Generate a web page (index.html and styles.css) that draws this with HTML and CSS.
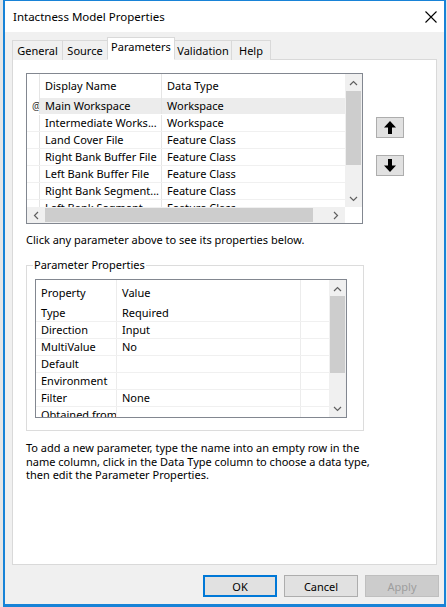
FILE: index.html
```html
<!DOCTYPE html>
<html>
<head>
<meta charset="utf-8">
<link rel="stylesheet" href="styles.css">
</head>
<body>
<div class="window">
  <div class="titlebar">
    <span class="title">Intactness Model Properties</span>
    <svg class="close" width="12" height="12" viewBox="0 0 12 12"><path d="M0.5 0.5 L11.5 11.5 M11.5 0.5 L0.5 11.5" stroke="#000" stroke-width="1.1" fill="none"/></svg>
  </div>
  <div class="client">
    <div class="tabs">
      <div class="tab t-general">General</div>
      <div class="tab t-source">Source</div>
      <div class="tab t-params active">Parameters</div>
      <div class="tab t-valid">Validation</div>
      <div class="tab t-help">Help</div>
    </div>
    <div class="panel">
      <div class="top-row">
        <div class="grid grid-top">
          <div class="content">
            <div class="row head">
              <div class="c ind"></div><div class="c name">Display Name</div><div class="c type">Data Type</div>
            </div>
            <div class="row sel">
              <div class="c ind"><span class="glyph">@</span></div><div class="c name">Main Workspace</div><div class="c type">Workspace</div>
            </div>
            <div class="row">
              <div class="c ind"></div><div class="c name">Intermediate Works...</div><div class="c type">Workspace</div>
            </div>
            <div class="row">
              <div class="c ind"></div><div class="c name">Land Cover File</div><div class="c type">Feature Class</div>
            </div>
            <div class="row">
              <div class="c ind"></div><div class="c name">Right Bank Buffer File</div><div class="c type">Feature Class</div>
            </div>
            <div class="row">
              <div class="c ind"></div><div class="c name">Left Bank Buffer File</div><div class="c type">Feature Class</div>
            </div>
            <div class="row">
              <div class="c ind"></div><div class="c name">Right Bank Segment...</div><div class="c type">Feature Class</div>
            </div>
            <div class="row">
              <div class="c ind"></div><div class="c name">Left Bank Segment...</div><div class="c type">Feature Class</div>
            </div>
          </div>
          <div class="vscroll">
            <svg class="chev" width="9" height="6" viewBox="0 0 9 6"><path d="M1 5 L4.5 1.5 L8 5" stroke="#606060" stroke-width="1.2" fill="none"/></svg>
            <div class="vtrack"><div class="vthumb top-thumb"></div></div>
            <svg class="chev" width="9" height="6" viewBox="0 0 9 6"><path d="M1 1 L4.5 4.5 L8 1" stroke="#606060" stroke-width="1.2" fill="none"/></svg>
          </div>
          <div class="hscroll">
            <svg class="chev" width="6" height="9" viewBox="0 0 6 9"><path d="M5 1 L1.5 4.5 L5 8" stroke="#606060" stroke-width="1.2" fill="none"/></svg>
            <div class="htrack"><div class="hthumb"></div></div>
            <svg class="chev" width="6" height="9" viewBox="0 0 6 9"><path d="M1 1 L4.5 4.5 L1 8" stroke="#606060" stroke-width="1.2" fill="none"/></svg>
          </div>
          <div class="corner"></div>
        </div>
        <div class="movers">
          <button class="mover" type="button"><svg width="12" height="13" viewBox="0 0 12 13"><path d="M6 0 L12 6.5 L8 6.5 L8 13 L4 13 L4 6.5 L0 6.5 Z" fill="#000"/></svg></button>
          <button class="mover" type="button"><svg width="12" height="13" viewBox="0 0 12 13"><path d="M6 13 L12 6.5 L8 6.5 L8 0 L4 0 L4 6.5 L0 6.5 Z" fill="#000"/></svg></button>
        </div>
      </div>
      <p class="hint">Click any parameter above to see its properties below.</p>
      <fieldset class="group">
        <legend>Parameter Properties</legend>
        <div class="grid grid-props">
          <div class="content">
            <div class="prow head"><div class="c prop">Property</div><div class="c val">Value</div><div class="c extra"></div></div>
            <div class="prow"><div class="c prop">Type</div><div class="c val">Required</div><div class="c extra"></div></div>
            <div class="prow"><div class="c prop">Direction</div><div class="c val">Input</div><div class="c extra"></div></div>
            <div class="prow"><div class="c prop">MultiValue</div><div class="c val">No</div><div class="c extra"></div></div>
            <div class="prow"><div class="c prop">Default</div><div class="c val"></div><div class="c extra"></div></div>
            <div class="prow"><div class="c prop">Environment</div><div class="c val"></div><div class="c extra"></div></div>
            <div class="prow"><div class="c prop">Filter</div><div class="c val">None</div><div class="c extra"></div></div>
            <div class="prow"><div class="c prop">Obtained from</div><div class="c val"></div><div class="c extra"></div></div>
          </div>
          <div class="vscroll">
            <svg class="chev" width="9" height="6" viewBox="0 0 9 6"><path d="M1 5 L4.5 1.5 L8 5" stroke="#606060" stroke-width="1.2" fill="none"/></svg>
            <div class="vtrack"><div class="vthumb props-thumb"></div></div>
            <svg class="chev" width="9" height="6" viewBox="0 0 9 6"><path d="M1 1 L4.5 4.5 L8 1" stroke="#606060" stroke-width="1.2" fill="none"/></svg>
          </div>
        </div>
      </fieldset>
      <p class="help">To add a new parameter, type the name into an empty row in the<br>name column, click in the Data Type column to choose a data type,<br>then edit the Parameter Properties.</p>
    </div>
    <div class="buttons">
      <button class="btn ok" type="button">OK</button>
      <button class="btn" type="button">Cancel</button>
      <button class="btn disabled" type="button">Apply</button>
    </div>
  </div>
</div>
</body>
</html>
```

FILE: styles.css
```css
* { box-sizing: border-box; }
html, body { margin: 0; padding: 0; }
body {
  background: #e6e6e6;
  font-family: "Noto Sans", "Open Sans", sans-serif;
  font-size: 11px;
  color: #000;
  width: 447px;
  height: 607px;
  overflow: hidden;
}
.window {
  margin-left: 3px;
  width: 443px;
  height: 607px;
  border: 2px solid #1883d7;
  border-top-width: 1px;
  border-bottom-width: 3px;
  display: flex;
  flex-direction: column;
  background: #f0f0f0;
}
.titlebar {
  height: 31px;
  flex: none;
  background: #fff;
  display: flex;
  align-items: center;
  justify-content: space-between;
  padding: 0 7px 0 8px;
}
.title { font-size: 11.5px; line-height: 16px; }
.close { display: block; }
.client {
  flex: 1;
  display: flex;
  flex-direction: column;
  background: #f0f0f0;
}
.tabs {
  height: 28px;
  display: flex;
  align-items: flex-end;
  padding-left: 7px;
  position: relative;
  z-index: 1;
  margin-bottom: -1px;
}
.tab {
  height: 20px;
  border: 1px solid #d9d9d9;
  border-bottom: none;
  background: #f0f0f0;
  margin-right: -1px;
  display: flex;
  align-items: center;
  justify-content: center;
  line-height: 14px;
}
.tab.active {
  height: 23px;
  background: #fff;
  padding-bottom: 4px;
  position: relative;
  z-index: 2;
  border-bottom: 1px solid #fff;
}
.t-general { width: 51px; }
.t-source { width: 46px; }
.t-params { width: 68px; }
.t-valid { width: 58px; }
.t-help { width: 40px; }
.panel {
  height: 506px;
  margin: 0 7px 0 7px;
  background: #fff;
  border: 1px solid #d9d9d9;
  padding: 13px 0 0 13px;
}
.top-row { display: flex; }

/* grids */
.grid {
  border: 1px solid #828790;
  background: #fff;
  display: grid;
  overflow: hidden;
}
.grid-top {
  width: 337px;
  height: 151px;
  grid-template-columns: 1fr 17px;
  grid-template-rows: 1fr 16px;
}
.content { overflow: hidden; }
.row { display: flex; height: 17px; border-bottom: 1px solid #f0f0f0; }
.row.head { height: 24px; border-bottom: none; }
.row.sel { background: #ececec; border-bottom: 1px solid #fff; }
.row .c {
  line-height: 16px;
  white-space: nowrap;
  overflow: hidden;
}
.row.head .c { line-height: 24px; }
.c.ind { width: 13px; border-right: 1px solid #e5e5e5; background: #fff; overflow: hidden; }
.c.name { width: 122px; padding-left: 5px; border-right: 1px solid #e5e5e5; }
.c.type { flex: 1; padding-left: 5px; }
.glyph { display: block; padding-left: 5px; font-size: 10px; line-height: 16px; color: #333; }

.vscroll {
  background: #f0f0f0;
  display: flex;
  flex-direction: column;
  align-items: center;
  padding: 6px 0 5px;
}
.vtrack { flex: 1; width: 100%; padding: 0 1px; }
.vthumb { background: #cdcdcd; width: 100%; }
.top-thumb { margin-top: 5px; height: 74px; }
.props-thumb { margin-top: 4px; height: 77px; }
.chev { display: block; flex: none; }
.hscroll {
  background: #f0f0f0;
  display: flex;
  align-items: center;
  padding: 0 6px;
}
.htrack { flex: 1; height: 100%; padding: 1px 5px 1px 6px; }
.hthumb { background: #cdcdcd; width: 268px; height: 100%; }
.corner { background: #fff; }

.movers {
  margin-left: 13px;
  padding-top: 44px;
  display: flex;
  flex-direction: column;
  gap: 17px;
}
.mover {
  width: 28px;
  height: 21px;
  padding: 0;
  margin: 0;
  border: 1px solid #adadad;
  background: #e1e1e1;
  display: flex;
  align-items: center;
  justify-content: center;
}
.mover svg { display: block; }

.hint { margin: 9px 0 0; line-height: 14px; }
.group {
  margin: 11px 0 0;
  width: 338px;
  border: 1px solid #dcdcdc;
  padding: 7px 0 12px 8px;
}
.group legend {
  margin-left: -2px;
  padding: 0 1px;
  line-height: 14px;
}
.grid-props {
  width: 312px;
  height: 139px;
  grid-template-columns: 1fr 17px;
}
.prow { display: flex; height: 17px; border-bottom: 1px solid #f0f0f0; }
.prow.head { height: 25px; border-bottom: none; }
.prow .c { line-height: 16px; white-space: nowrap; overflow: hidden; }
.prow.head .c { line-height: 25px; }
.c.prop { width: 81px; padding-left: 5px; border-right: 1px solid #ececec; }
.c.val { width: 184px; padding-left: 5px; border-right: 1px solid #ececec; }
.c.extra { flex: 1; }

.help { margin: 10px 0 0; line-height: 13.5px; }

.buttons {
  display: flex;
  justify-content: flex-end;
  gap: 7px;
  padding: 10px 5px 0 0;
}
.btn {
  width: 74px;
  height: 22px;
  margin: 0;
  padding: 0;
  font-family: "Noto Sans", "Open Sans", sans-serif;
  font-size: 11px;
  color: #000;
  background: #e1e1e1;
  border: 1px solid #adadad;
}
.btn.ok { border: 2px solid #0078d7; }
.btn.disabled { background: #cccccc; border-color: #bfbfbf; color: #9d9d9d; }
```
